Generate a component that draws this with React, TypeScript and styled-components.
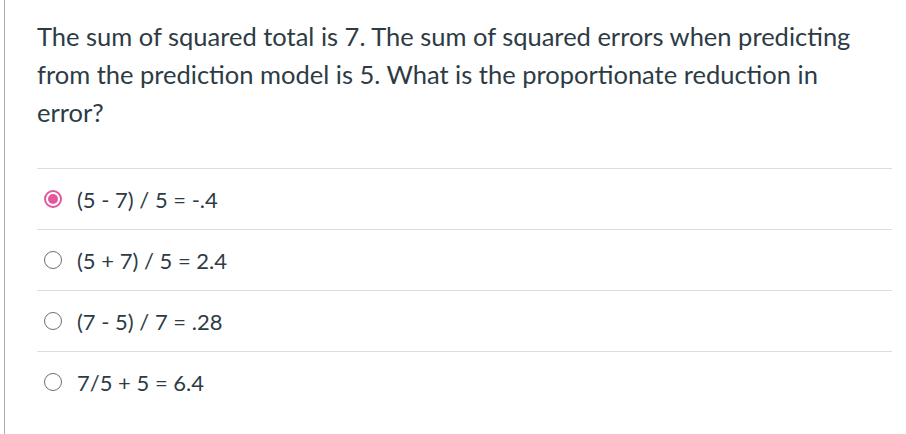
import React, { useState } from 'react';
import styled, { createGlobalStyle } from 'styled-components';

const GlobalStyle = createGlobalStyle`
  html, body {
    margin: 0;
    padding: 0;
    background: #ffffff;
  }
  body {
    font-family: Lato, "Helvetica Neue", Arial, sans-serif;
    color: #2d3b45;
  }
`;

const Page = styled.div`
  width: 906px;
  height: 434px;
  box-sizing: border-box;
  padding-left: 4px;
  overflow: hidden;
`;

const QuestionCard = styled.div`
  height: 100%;
  border-left: 1px solid #a5afb5;
  padding: 17px 14px 0 32px;
  box-sizing: border-box;
`;

const QuestionText = styled.p`
  margin: 0 0 37px;
  max-width: 830px;
  font-size: 25.5px;
  line-height: 38px;
  color: #2d3b45;
`;

const AnswerList = styled.div`
  display: flex;
  flex-direction: column;
`;

const AnswerRow = styled.label`
  display: flex;
  align-items: center;
  gap: 15px;
  height: 61px;
  box-sizing: border-box;
  border-top: 1px solid #dadee0;
  padding-left: 7px;
  cursor: pointer;
`;

const Radio = styled.span<{ $checked: boolean }>`
  width: 18px;
  height: 18px;
  box-sizing: border-box;
  border-radius: 50%;
  border: ${({ $checked }) => ($checked ? '2px solid #e5579c' : '1.5px solid #6b7075')};
  display: flex;
  align-items: center;
  justify-content: center;
  flex-shrink: 0;

  &::after {
    content: '';
    width: 10px;
    height: 10px;
    border-radius: 50%;
    background: #e5579c;
    display: ${({ $checked }) => ($checked ? 'block' : 'none')};
  }
`;

const AnswerText = styled.span`
  font-size: 22px;
  color: #2d3b45;
`;

const answers = [
  '(5 - 7) / 5 = -.4',
  '(5 + 7) / 5 = 2.4',
  '(7 - 5) / 7 = .28',
  '7/5 + 5 = 6.4',
];

export default function App() {
  const [selected, setSelected] = useState(0);

  return (
    <Page>
      <GlobalStyle />
      <QuestionCard>
        <QuestionText>
          The sum of squared total is 7. The sum of squared errors when predicting from the
          prediction model is 5. What is the proportionate reduction in error?
        </QuestionText>
        <AnswerList>
          {answers.map((answer, i) => (
            <AnswerRow key={answer} onClick={() => setSelected(i)}>
              <Radio $checked={selected === i} />
              <AnswerText>{answer}</AnswerText>
            </AnswerRow>
          ))}
        </AnswerList>
      </QuestionCard>
    </Page>
  );
}
